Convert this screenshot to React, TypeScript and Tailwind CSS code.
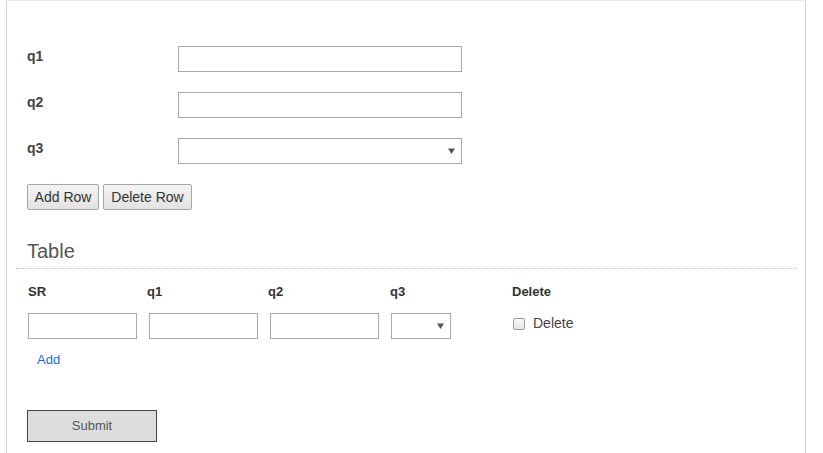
import React from "react";

function Arrow() {
  return (
    <svg
      className="pointer-events-none absolute right-[7px] top-1/2 -translate-y-1/2"
      width="7"
      height="6"
      viewBox="0 0 7 6"
    >
      <path d="M0 0.5 L7 0.5 L3.5 6 Z" fill="#555" />
    </svg>
  );
}

function Select({ className }: { className: string }) {
  return (
    <div className={"relative " + className}>
      <select className="h-full w-full appearance-none border border-[#a9a9a9] bg-white outline-none" />
      <Arrow />
    </div>
  );
}

function FormRow({ label, children }: { label: string; children: React.ReactNode }) {
  return (
    <div className="flex h-[26px] items-start">
      <div className="w-[151px] pt-[3px] text-[14px] font-bold leading-[15px] text-[#444]">{label}</div>
      {children}
    </div>
  );
}

export default function App() {
  const font = { fontFamily: '"Liberation Sans", Arial, sans-serif' };
  return (
    <div className="min-h-[453px] bg-white" style={font}>
      <div className="ml-[6px] h-[453px] w-[800px] border-x border-t border-x-[#d0d0d0] border-t-[#ececec]">
        <div className="flex flex-col gap-[20px] pl-[20px] pt-[45px]">
          <FormRow label="q1">
            <input className="h-[26px] w-[284px] border border-[#a9a9a9] outline-none" />
          </FormRow>
          <FormRow label="q2">
            <input className="h-[26px] w-[284px] border border-[#a9a9a9] outline-none" />
          </FormRow>
          <FormRow label="q3">
            <Select className="h-[26px] w-[284px]" />
          </FormRow>
          <div className="flex gap-[4px]">
            <button className="h-[26px] w-[72px] rounded-[2px] border border-[#a6a6a6] bg-gradient-to-b from-[#f4f4f4] to-[#e2e2e2] text-[14px] text-[#333]">
              Add Row
            </button>
            <button className="h-[26px] w-[89px] rounded-[2px] border border-[#a6a6a6] bg-gradient-to-b from-[#f4f4f4] to-[#e2e2e2] text-[14px] text-[#333]">
              Delete Row
            </button>
          </div>
        </div>

        <div className="mx-[9px] mt-[30px] border-b border-dotted border-[#bbb] pb-[5px] pl-[11px]">
          <h2 className="text-[20px] leading-[23px] text-[#555]">Table</h2>
        </div>

        <div className="pl-[21px] pt-[15px]">
          <div className="flex text-[13px] font-bold leading-[15px] text-[#333]">
            <div className="w-[119px]">SR</div>
            <div className="w-[121px]">q1</div>
            <div className="w-[122px]">q2</div>
            <div className="w-[122px]">q3</div>
            <div>Delete</div>
          </div>
          <div className="mt-[14px] flex items-start">
            <input className="h-[26px] w-[109px] border border-[#a9a9a9] outline-none" />
            <input className="ml-[12px] h-[26px] w-[109px] border border-[#a9a9a9] outline-none" />
            <input className="ml-[12px] h-[26px] w-[109px] border border-[#a9a9a9] outline-none" />
            <Select className="ml-[12px] h-[26px] w-[60px]" />
            <label className="ml-[62px] mt-0 flex items-center gap-[8px] text-[14px] text-[#444]">
              <span className="inline-block h-[12px] w-[12px] rounded-[2px] border border-[#999] bg-gradient-to-b from-[#fafafa] to-[#e6e6e6]" />
              Delete
            </label>
          </div>
          <div className="mt-[8px] pl-[9px]">
            <a className="cursor-pointer text-[13px] leading-[15px] text-[#1a6ecb]">Add</a>
          </div>
          <button className="-ml-[1px] mt-[39px] h-[32px] w-[130px] border border-[#444] bg-[#dddddd] text-[13px] text-[#555]">
            Submit
          </button>
        </div>
      </div>
    </div>
  );
}
